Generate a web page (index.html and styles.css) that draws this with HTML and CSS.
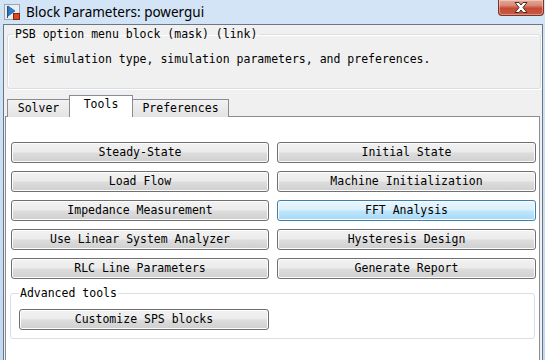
FILE: index.html
```html
<!DOCTYPE html>
<html>
<head>
<meta charset="utf-8">
<link rel="stylesheet" href="styles.css">
</head>
<body>
<div class="window">
  <div class="titlebar">
    <svg class="appicon" width="17" height="17" viewBox="0 0 17 17">
      <rect x="0.5" y="0.5" width="15" height="15" fill="#e9eef3" stroke="#9aa6b2"/>
      <line x1="3.5" y1="2" x2="3.5" y2="14" stroke="#3d4a57"/>
      <polygon points="4,2 11,7 4,12" fill="#2f7fd0" stroke="#1d5c9e" stroke-width="0.8"/>
      <rect x="9.5" y="9.5" width="6" height="6" fill="#e2441c" stroke="#7a2a12"/>
    </svg>
    <span class="title">Block Parameters: powergui</span>
    <div class="close">
      <svg width="18" height="13" viewBox="0 0 18 13">
        <path d="M3 1.5 L7 1.5 L9 4 L11 1.5 L15 1.5 L11 6.5 L15 11.5 L11 11.5 L9 9 L7 11.5 L3 11.5 L7 6.5 Z" fill="#fff" stroke="#4a2a24" stroke-width="1" stroke-linejoin="round"/>
      </svg>
    </div>
  </div>
  <div class="client">
    <fieldset class="group top-group">
      <legend>PSB option menu block (mask) (link)</legend>
      <p class="desc">Set simulation type, simulation parameters, and preferences.</p>
    </fieldset>
    <div class="tabs">
      <div class="tab tab-solver">Solver</div>
      <div class="tab tab-active">Tools</div>
      <div class="tab tab-pref">Preferences</div>
    </div>
    <div class="panel">
      <div class="btn-grid">
        <div class="btn">Steady-State</div>
        <div class="btn">Initial State</div>
        <div class="btn">Load Flow</div>
        <div class="btn">Machine Initialization</div>
        <div class="btn">Impedance Measurement</div>
        <div class="btn btn-hover">FFT Analysis</div>
        <div class="btn">Use Linear System Analyzer</div>
        <div class="btn">Hysteresis Design</div>
        <div class="btn">RLC Line Parameters</div>
        <div class="btn">Generate Report</div>
      </div>
      <fieldset class="group adv-group">
        <legend>Advanced tools</legend>
        <div class="btn btn-custom">Customize SPS blocks</div>
      </fieldset>
    </div>
  </div>
</div>
</body>
</html>
```

FILE: styles.css
```css
* { box-sizing: border-box; }
html, body { margin: 0; padding: 0; }
body {
  width: 545px;
  height: 360px;
  overflow: hidden;
  background: #c9def3;
}
.window {
  width: 545px;
  height: 360px;
  background: linear-gradient(#d3e4f6, #c3d9f1);
  display: flex;
  flex-direction: column;
}
.titlebar {
  height: 24px;
  display: flex;
  align-items: flex-start;
  flex-shrink: 0;
}
.appicon {
  margin: 4px 0 0 4px;
  flex-shrink: 0;
}
.title {
  margin: 2px 0 0 5px;
  font-family: "Noto Sans", "Open Sans", sans-serif;
  font-size: 13.5px;
  line-height: 20px;
  color: #000;
}
.close {
  margin-left: auto;
  margin-right: 1px;
  width: 46px;
  height: 16px;
  border: 1px solid #7e3226;
  border-top: none;
  border-radius: 0 0 4px 4px;
  background: linear-gradient(#e5a895 0%, #d98a78 35%, #c64a33 55%, #c75a44 100%);
  box-shadow: inset 0 0 0 1px rgba(255,255,255,0.35);
  display: flex;
  align-items: center;
  justify-content: center;
}
.client {
  flex: 1;
  margin: 0 2px 0 3px;
  border: 1px solid #6a7585;
  border-bottom: none;
  background: #f0f0f0;
  overflow: hidden;
  font-family: "DejaVu Sans Mono", "Liberation Mono", monospace;
  font-size: 11.5px;
  line-height: 13px;
  color: #000;
}
.group {
  border: 1px solid #d5dfe5;
  border-radius: 3px;
  box-shadow: inset 1px 1px 0 #fff, 1px 1px 0 #fff;
  min-width: 0;
}
.group legend {
  padding: 0 2px;
  line-height: 13px;
}
.top-group {
  margin: 3px 1px 0 3px;
  padding: 12px 5px 22px 5px;
}
.desc {
  margin: 0;
  padding-left: 2px;
  white-space: nowrap;
}
.tabs {
  display: flex;
  align-items: flex-end;
  margin: 6px 0 0 3px;
  height: 21px;
  position: relative;
  z-index: 2;
}
.tab {
  height: 18px;
  border: 1px solid #898c95;
  border-bottom: none;
  background: linear-gradient(#f2f2f2, #e3e3e3);
  text-align: center;
  line-height: 17px;
  margin-bottom: -1px;
}
.tab-solver { width: 63px; }
.tab-active {
  width: 64px;
  height: 22px;
  margin: 0 -1px -1px -1px;
  background: #fff;
  line-height: 17px;
  position: relative;
  z-index: 3;
}
.tab-pref { width: 97px; }
.panel {
  margin: 0 2px 0 1px;
  height: 300px;
  border: 1px solid #898c95;
  background: #fff;
  padding: 25px 4px 0 5px;
}
.btn-grid {
  display: grid;
  grid-template-columns: 258px 259px;
  column-gap: 8px;
  row-gap: 8px;
}
.btn {
  height: 21px;
  border: 1px solid #707070;
  border-radius: 3px;
  background: linear-gradient(#f2f2f2 0%, #ebebeb 48%, #dddddd 52%, #cfcfcf 100%);
  box-shadow: inset 0 0 0 1px #fcfcfc;
  text-align: center;
  line-height: 19px;
  white-space: nowrap;
}
.btn-hover {
  border-color: #3c7fb1;
  background: linear-gradient(#eaf6fd 0%, #d9f0fc 48%, #bee6fd 52%, #a7d9f5 100%);
}
.adv-group {
  margin: 8px 0 0 -1px;
  padding: 9px 8px 8px 8px;
}
.adv-group legend {
  padding: 0 1px;
}
.btn-custom {
  width: 250px;
}
```
